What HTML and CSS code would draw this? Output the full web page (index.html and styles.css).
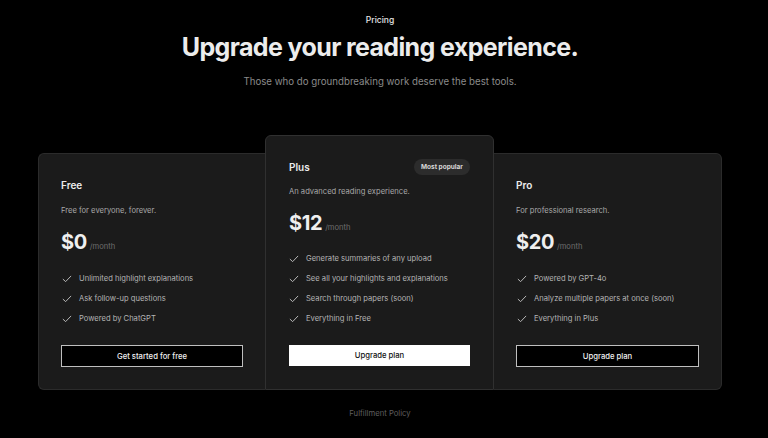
FILE: index.html
```html
<!DOCTYPE html>
<html>
<head>
<meta charset="utf-8">
<link rel="stylesheet" href="styles.css">
</head>
<body>
<div class="page">
  <header class="hero">
    <p class="eyebrow">Pricing</p>
    <h1 class="title">Upgrade your reading experience.</h1>
    <p class="subtitle">Those who do groundbreaking work deserve the best tools.</p>
  </header>

  <section class="plans">
    <div class="card card-free">
      <div class="card-head"><h2 class="plan-name">Free</h2></div>
      <p class="plan-desc">Free for everyone, forever.</p>
      <div class="price"><span class="amount">$0</span><span class="per">/month</span></div>
      <ul class="features">
        <li><svg class="check" viewBox="0 0 12 10"><path d="M1.2 5.4 L4.3 8.3 L10.8 1.5"/></svg>Unlimited highlight explanations</li>
        <li><svg class="check" viewBox="0 0 12 10"><path d="M1.2 5.4 L4.3 8.3 L10.8 1.5"/></svg>Ask follow-up questions</li>
        <li><svg class="check" viewBox="0 0 12 10"><path d="M1.2 5.4 L4.3 8.3 L10.8 1.5"/></svg>Powered by ChatGPT</li>
      </ul>
      <button class="btn btn-outline">Get started for free</button>
    </div>

    <div class="card card-plus">
      <div class="card-head"><h2 class="plan-name">Plus</h2><span class="badge">Most popular</span></div>
      <p class="plan-desc">An advanced reading experience.</p>
      <div class="price"><span class="amount">$12</span><span class="per">/month</span></div>
      <ul class="features">
        <li><svg class="check" viewBox="0 0 12 10"><path d="M1.2 5.4 L4.3 8.3 L10.8 1.5"/></svg>Generate summaries of any upload</li>
        <li><svg class="check" viewBox="0 0 12 10"><path d="M1.2 5.4 L4.3 8.3 L10.8 1.5"/></svg>See all your highlights and explanations</li>
        <li><svg class="check" viewBox="0 0 12 10"><path d="M1.2 5.4 L4.3 8.3 L10.8 1.5"/></svg>Search through papers (soon)</li>
        <li><svg class="check" viewBox="0 0 12 10"><path d="M1.2 5.4 L4.3 8.3 L10.8 1.5"/></svg>Everything in Free</li>
      </ul>
      <button class="btn btn-solid">Upgrade plan</button>
    </div>

    <div class="card card-pro">
      <div class="card-head"><h2 class="plan-name">Pro</h2></div>
      <p class="plan-desc">For professional research.</p>
      <div class="price"><span class="amount">$20</span><span class="per">/month</span></div>
      <ul class="features">
        <li><svg class="check" viewBox="0 0 12 10"><path d="M1.2 5.4 L4.3 8.3 L10.8 1.5"/></svg>Powered by GPT-4o</li>
        <li><svg class="check" viewBox="0 0 12 10"><path d="M1.2 5.4 L4.3 8.3 L10.8 1.5"/></svg>Analyze multiple papers at once (soon)</li>
        <li><svg class="check" viewBox="0 0 12 10"><path d="M1.2 5.4 L4.3 8.3 L10.8 1.5"/></svg>Everything in Plus</li>
      </ul>
      <button class="btn btn-outline">Upgrade plan</button>
    </div>
  </section>

  <footer class="foot"><a class="foot-link">Fulfillment Policy</a></footer>
</div>
</body>
</html>
```

FILE: styles.css
```css
* { box-sizing: border-box; }
html, body { margin: 0; padding: 0; background: #000; }
body {
  font-family: Inter, "Noto Sans", "Liberation Sans", sans-serif;
  color: #ececec;
  height: 438px;
  overflow: hidden;
}
.page {
  width: 760px;
  margin: 0;
  padding-top: 14px;
}
.hero { text-align: center; }
.eyebrow {
  margin: 0;
  font-size: 8.5px;
  line-height: 12px;
  font-weight: 500;
  color: #e6e6e6;
}
.title {
  margin: 5px 0 0;
  font-size: 25px;
  line-height: 32px;
  font-weight: 700;
  letter-spacing: -0.025em;
  color: #ececec;
}
.subtitle {
  margin: 12px 0 0;
  font-size: 9.7px;
  line-height: 14px;
  color: #8a8a8a;
}
.plans {
  margin: 46px 0 0 38px;
  display: grid;
  grid-template-columns: 227px 229px 228px;
  align-items: end;
}
.card {
  background: #1b1b1b;
  border: 1px solid #2b2b2b;
  display: flex;
  flex-direction: column;
}
.card-free {
  height: 237px;
  border-right: none;
  border-radius: 6px 0 0 6px;
  padding: 23px 22px 22px 22px;
}
.card-plus {
  height: 255px;
  border-radius: 6px 6px 0 0;
  padding: 23px 23px 23px 23px;
  border-color: #303030;
}
.card-pro {
  height: 237px;
  border-left: none;
  border-radius: 0 6px 6px 0;
  padding: 23px 22px 22px 22px;
}
.card-head {
  display: flex;
  align-items: center;
  justify-content: space-between;
  height: 16px;
}
.plan-name {
  margin: 0;
  font-size: 10px;
  line-height: 14px;
  font-weight: 600;
  color: #ececec;
}
.badge {
  background: #2c2c2c;
  color: #d8d8d8;
  font-size: 6.5px;
  font-weight: 700;
  line-height: 16px;
  height: 16px;
  padding: 0 7px;
  border-radius: 8px;
}
.plan-desc {
  margin: 12px 0 0;
  font-size: 7.6px;
  line-height: 12px;
  color: #a8a8a8;
}
.card-plus .plan-desc { margin-top: 11px; }
.price {
  margin-top: 12px;
  display: flex;
  align-items: baseline;
  gap: 3px;
  height: 26px;
}
.card-plus .price { margin-top: 12px; }
.amount {
  font-size: 20px;
  line-height: 26px;
  font-weight: 700;
  letter-spacing: -0.02em;
  color: #efefef;
}
.per {
  font-size: 7.6px;
  color: #6f6f6f;
}
.features {
  list-style: none;
  margin: 18px 0 0;
  padding: 0;
  display: flex;
  flex-direction: column;
  gap: 8px;
}
.card-plus .features { margin-top: 17px; }
.features li {
  display: flex;
  align-items: center;
  font-size: 7.6px;
  line-height: 12px;
  color: #b4b4b4;
}
.check {
  width: 10px;
  height: 8px;
  margin: 0 7px 0 1px;
  fill: none;
  stroke: #bdbdbd;
  stroke-width: 1.2;
  stroke-linecap: round;
  stroke-linejoin: round;
}
.card-plus .check { margin-left: 0; margin-right: 7px; }
.btn {
  margin-top: auto;
  height: 22px;
  width: 100%;
  font-family: inherit;
  font-size: 7.7px;
  font-weight: 500;
  cursor: pointer;
}
.btn-outline {
  background: #000;
  color: #f0f0f0;
  border: 1px solid #bfbfbf;
}
.btn-solid {
  background: #fff;
  color: #111;
  border: 1px solid #fff;
  height: 21px;
}
.foot {
  text-align: center;
  margin-top: 10px;
}
.foot-link {
  font-size: 7.7px;
  line-height: 10px;
  color: #5f5f5f;
}
```
